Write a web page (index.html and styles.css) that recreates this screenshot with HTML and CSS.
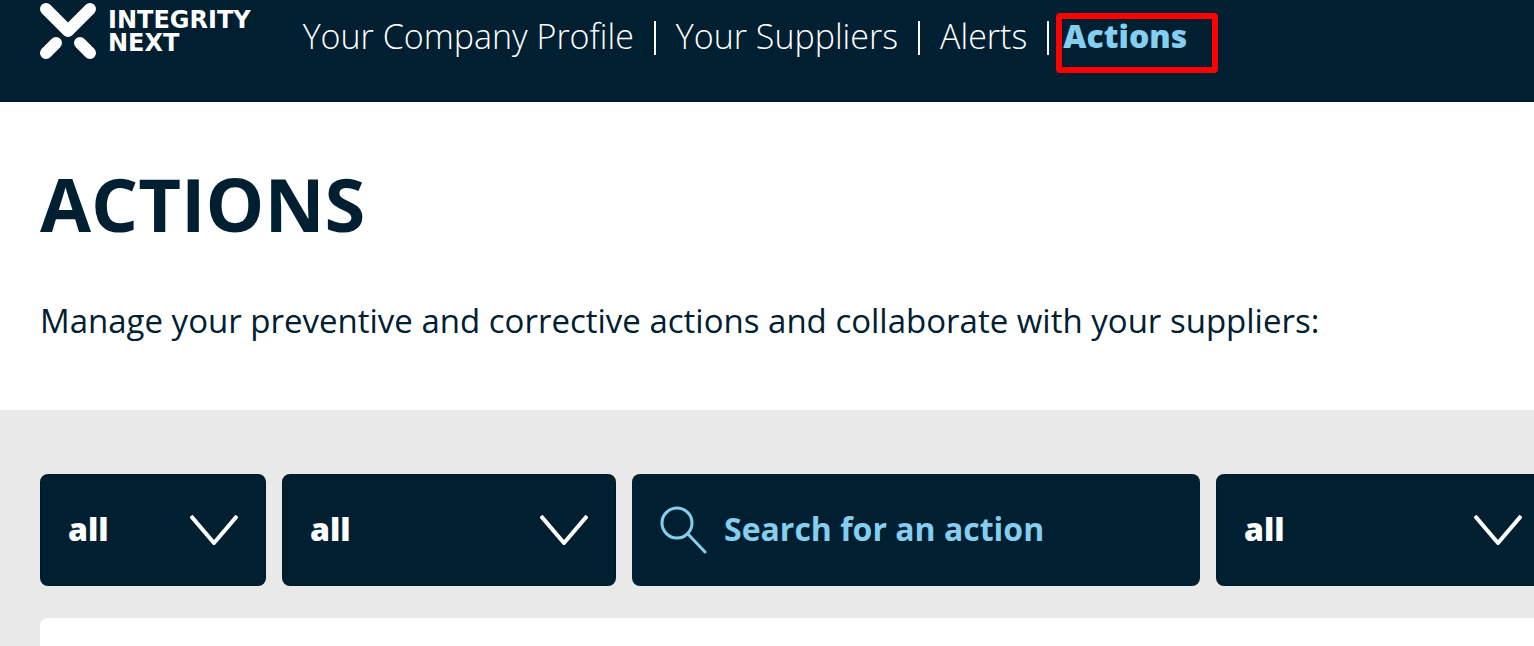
FILE: index.html
```
<!DOCTYPE html>
<html lang="en">

<head>
    <meta charset="UTF-8">
    <meta name="viewport" content="width=device-width, initial-scale=1.0">
    <title>IntegrityNext - Actions</title>
    <link rel="stylesheet" href="styles.css">
</head>

<body>
    <header class="header">
        <a class="logo" href="#">
            <svg class="logo-mark" viewBox="0 0 56 56" aria-hidden="true">
                <path d="M6 6 L28 28 L50 6" stroke-width="12" />
                <path d="M6 50 L16 40 M50 50 L40 40" stroke-width="12" />
            </svg>
            <span class="logo-text">INTEGRITY<br>NEXT</span>
        </a>

        <nav class="nav">
            <a class="nav-link" href="#">Your Company Profile</a>
            <a class="nav-link" href="#">Your Suppliers</a>
            <a class="nav-link" href="#">Alerts</a>
            <a class="nav-link active" href="#">Actions</a>
        </nav>
    </header>

    <main>
        <section class="intro">
            <h1>ACTIONS</h1>
            <p>Manage your preventive and corrective actions and collaborate with your suppliers:</p>
        </section>

        <section class="content">
            <form class="filters">
                <div class="filter filter-small">
                    <select aria-label="Status">
                        <option>all</option>
                    </select>
                    <svg class="chevron" viewBox="0 0 48 30" aria-hidden="true"><path d="M1 1 L24 28 L47 1" /></svg>
                </div>
                <div class="filter">
                    <select aria-label="Type">
                        <option>all</option>
                    </select>
                    <svg class="chevron" viewBox="0 0 48 30" aria-hidden="true"><path d="M1 1 L24 28 L47 1" /></svg>
                </div>
                <label class="search">
                    <svg class="search-icon" viewBox="0 0 48 48" aria-hidden="true">
                        <circle cx="17" cy="17" r="15" />
                        <path d="M28 28 L45 46" />
                    </svg>
                    <input type="text" aria-label="Search for an action" placeholder="Search for an action">
                </label>
                <div class="filter">
                    <select aria-label="Supplier">
                        <option>all</option>
                    </select>
                    <svg class="chevron" viewBox="0 0 48 30" aria-hidden="true"><path d="M1 1 L24 28 L47 1" /></svg>
                </div>
            </form>

            <div class="results"></div>
        </section>
    </main>
</body>

</html>
```
FILE: styles.css
```
*,
*::after {
    margin: 0;
    padding: 0;
    box-sizing: border-box;
    font-family: 'Open Sans', sans-serif;
}

body {
    background: #fff;
    color: #002031;
    font-size: 33px;
    overflow-x: hidden;
}

a {
    color: inherit;
    text-decoration: none;
}

.header {
    display: flex;
    align-items: flex-start;
    gap: 52px;
    height: 102px;
    padding: 3px 40px 0;
    background: #002031;
    border-bottom: 2px solid #001a29;
    color: #fff;
}

.logo {
    display: flex;
    gap: 12px;
}

.logo-mark {
    width: 56px;
    height: 56px;
    fill: none;
    stroke: #fff;
    stroke-linecap: round;
    stroke-linejoin: round;
}

.logo-text {
    padding-top: 6px;
    font-family: 'DejaVu Sans', sans-serif;
    font-size: 24px;
    font-weight: bold;
    line-height: 23px;
}

.nav {
    display: flex;
    padding-top: 18px;
}

.nav-link {
    position: relative;
    padding-bottom: 4px;
    font-size: 34px;
    font-weight: 300;
    line-height: 30px;
    white-space: nowrap;
}

.nav-link:not(:last-child) {
    margin-right: 20px;
    padding-right: 20px;
    border-right: 2px solid #fff;
}

.nav-link.active {
    margin-left: -6px;
    color: #84cef0;
    font-size: 32px;
    font-weight: 800;
}

/* highlight frame around the current page */
.nav-link.active::after {
    content: '';
    position: absolute;
    top: -8px;
    left: -7px;
    width: 162px;
    height: 60px;
    border: 6px solid #f00;
    border-radius: 4px;
}

.intro {
    padding: 58px 40px 66px;
}

h1 {
    margin-bottom: 50px;
    font-size: 74px;
    font-weight: 700;
    line-height: 88px;
}

.intro p {
    line-height: 46px;
}

.content {
    padding: 64px 0 0 40px;
    background: #e9e9e9;
    overflow: hidden;
}

.filters {
    display: flex;
    gap: 16px;
    margin-right: -16px;
    margin-bottom: 32px;
}

.filter,
.search {
    height: 112px;
    background: #002031;
    border-radius: 8px;
}

.filter {
    position: relative;
    flex: 0 0 334px;
    border: 2px solid #001c2b;
    color: #fff;
}

.filter-small {
    flex-basis: 226px;
}

select,
input {
    width: 100%;
    height: 100%;
    padding-bottom: 4px;
    background: none;
    border: none;
    outline: none;
    color: inherit;
    font-size: 32px;
    font-weight: 800;
}

select {
    padding-left: 26px;
    appearance: none;
}

.chevron {
    position: absolute;
    top: 39px;
    right: 26px;
    width: 48px;
    height: 30px;
    fill: none;
    stroke: #fff;
    stroke-width: 4;
    stroke-linejoin: round;
    pointer-events: none;
}

.search {
    display: flex;
    flex: 1;
    align-items: center;
    gap: 16px;
    padding: 0 28px;
    color: #84cef0;
}

.search input {
    font-weight: 700;
}

.search-icon {
    flex: none;
    width: 48px;
    height: 48px;
    fill: none;
    stroke: #84cef0;
    stroke-width: 3;
    stroke-linecap: round;
}

input::placeholder {
    color: #84cef0;
    opacity: 1;
}

.results {
    min-height: 28px;
    background: #fff;
    border-top-left-radius: 8px;
}
```
